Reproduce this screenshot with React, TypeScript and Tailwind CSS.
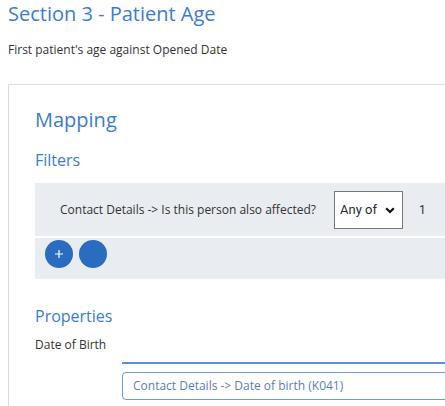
import React from "react";

export default function App() {
  return (
    <div className="w-[445px] h-[406px] overflow-hidden bg-white text-[#333] px-2" style={{ fontFamily: '"Open Sans", "Noto Sans", sans-serif' }}>
      <h1 className="text-[20px] leading-[28px] text-[#3a7bd5] font-normal">Section 3 - Patient Age</h1>
      <p className="mt-[13px] text-[12px] leading-[18px]">First patient's age against Opened Date</p>
      <div className="mt-[25px] w-[640px] border border-[#dddddd] pl-[26px] pt-[21px] pb-6">
        <h2 className="text-[20px] leading-[28px] text-[#3a7bd5]">Mapping</h2>
        <h3 className="mt-[14px] text-[16px] leading-[24px] text-[#3a7bd5]">Filters</h3>
        <div className="mt-[11px] bg-[#e9ecf0]">
          <div className="h-[55px] flex items-center pl-[25px] border-b-2 border-white">
            <span className="text-[12px] leading-[18px]">Contact Details -&gt; Is this person also affected?</span>
            <div className="ml-[18px] w-[69px] h-[38px] border border-[#777] bg-white flex items-center justify-between pl-[5px] pr-[7px]" style={{ fontFamily: 'Roboto, "Liberation Sans", sans-serif' }}>
              <span className="text-[13px] text-[#2a2a3a]">Any of</span>
              <svg width="10" height="7" viewBox="0 0 10 7" className="mt-[1px]">
                <path d="M1.2 1.2 L5 5 L8.8 1.2" fill="none" stroke="#111" strokeWidth="2.2" />
              </svg>
            </div>
            <span className="ml-[16px] text-[12px] leading-[18px]" style={{ fontFamily: 'Roboto, "Liberation Sans", sans-serif' }}>1</span>
          </div>
          <div className="flex items-start gap-[6px] pl-[10px] pt-[2px] pb-[11px]">
            <button className="w-[28px] h-[28px] rounded-full bg-[#2a6cc0] text-white flex items-center justify-center">
              <svg width="10" height="10" viewBox="0 0 10 10">
                <path d="M5 1 V9 M1 5 H9" stroke="#fff" strokeWidth="1.2" />
              </svg>
            </button>
            <button className="w-[28px] h-[28px] rounded-full bg-[#2a6cc0]"></button>
          </div>
        </div>
        <h3 className="mt-[25px] text-[16px] leading-[24px] text-[#3a7bd5]">Properties</h3>
        <div className="mt-[8px] text-[12px] leading-[18px]">Date of Birth</div>
        <div className="ml-[87px] mt-[8px]">
          <div className="h-[1.5px] bg-[#5b8fdc]"></div>
          <div className="mt-[8px] h-[28px] rounded-[4px] border border-[#6b9be2] flex items-center pl-[10px] text-[12px] text-[#5a7cc8]">
            Contact Details -&gt; Date of birth (K041)
          </div>
        </div>
      </div>
    </div>
  );
}
